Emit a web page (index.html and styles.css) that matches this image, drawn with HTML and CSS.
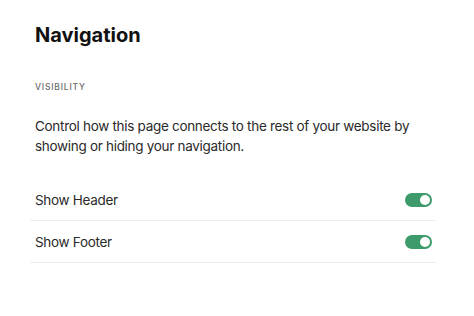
FILE: index.html
```html
<!DOCTYPE html>
<html>
<head>
<meta charset="utf-8">
<link rel="stylesheet" href="styles.css">
</head>
<body>
<div class="panel">
  <h1 class="title">Navigation</h1>
  <div class="section-label">VISIBILITY</div>
  <p class="desc">Control how this page connects to the rest of your website by showing or hiding your navigation.</p>
  <div class="rows">
    <div class="row">
      <span class="row-label">Show Header</span>
      <span class="toggle"><span class="knob"></span></span>
    </div>
    <div class="row">
      <span class="row-label">Show Footer</span>
      <span class="toggle"><span class="knob"></span></span>
    </div>
  </div>
</div>
</body>
</html>
```
FILE: styles.css
```css
html, body {
  margin: 0;
  padding: 0;
  background: #ffffff;
}
body {
  font-family: Inter, "Liberation Sans", sans-serif;
  color: #1a1a1a;
}
.panel {
  padding: 22px 38px 0 30px;
}
.title {
  margin: 0 0 0 5px;
  font-size: 20px;
  line-height: 26px;
  font-weight: 700;
  color: #111;
}
.section-label {
  margin: 33px 0 0 5px;
  font-size: 8.5px;
  line-height: 12px;
  font-weight: 500;
  letter-spacing: 0.8px;
  color: #6b6b6b;
}
.desc {
  margin: 23px 0 0 5px;
  font-size: 13.5px;
  line-height: 20px;
  letter-spacing: -0.3px;
  color: #2a2a2a;
}
.rows {
  margin-top: 23px;
}
.row {
  display: flex;
  align-items: center;
  justify-content: space-between;
  height: 41px;
  padding: 0 4px 0 5px;
  border-bottom: 1px solid #ececec;
}
.row-label {
  font-size: 13.5px;
  letter-spacing: -0.3px;
  color: #2a2a2a;
}
.toggle {
  width: 27px;
  height: 14px;
  border-radius: 7px;
  background: #3d9a6b;
  display: flex;
  align-items: center;
  justify-content: flex-end;
  padding: 0 2px;
  box-sizing: border-box;
}
.knob {
  width: 10px;
  height: 10px;
  border-radius: 50%;
  background: #fff;
}
```
